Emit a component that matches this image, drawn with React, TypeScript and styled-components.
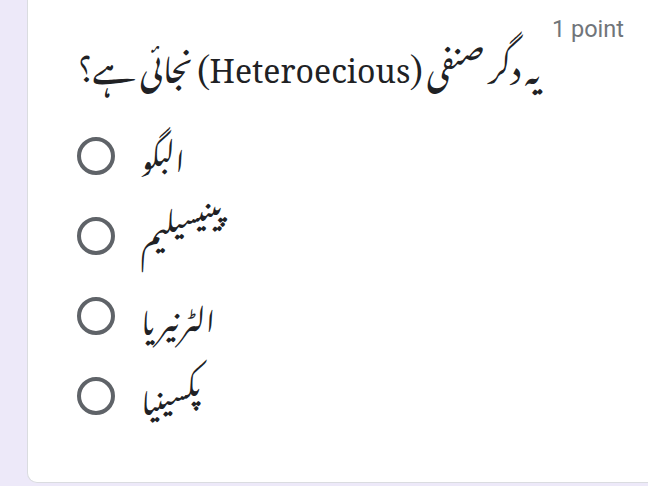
import { createGlobalStyle, styled } from 'styled-components';

const GlobalStyle = createGlobalStyle`
	html, body {
		margin: 0;
		padding: 0;
		background: #ede9f9;
	}
	body {
		font-family: Roboto, 'Liberation Sans', sans-serif;
	}
`;

const urduFont = `'Noto Nastaliq Urdu', 'DejaVu Serif', 'DejaVu Sans', serif`;

const Page = styled.div`
	height: 486px;
	box-sizing: border-box;
	padding: 0 0 3px 27px;
	overflow: hidden;
`;

const Card = styled.div`
	height: 100%;
	box-sizing: border-box;
	background: #fff;
	border: 1px solid #dadce0;
	border-top: none;
	border-right: none;
	border-radius: 0 0 0 10px;
	padding: 16px 24px 0 49px;
`;

const Header = styled.div`
	display: flex;
	align-items: flex-start;
	gap: 12px;
`;

const Title = styled.div`
	flex: 1;
	direction: rtl;
	text-align: right;
	font-family: ${urduFont};
	font-size: 32px;
	line-height: 48px;
	color: #202124;
	padding-top: 22px;
`;

const Points = styled.div`
	font-size: 23.5px;
	line-height: 26px;
	color: #70757a;
	white-space: nowrap;
`;

const Options = styled.div`
	display: flex;
	flex-direction: column;
	margin-top: 30px;
`;

const Option = styled.label`
	display: flex;
	align-items: center;
	gap: 26px;
	height: 80px;
`;

const Radio = styled.span`
	flex: none;
	width: 38px;
	height: 38px;
	box-sizing: border-box;
	border: 4px solid #5f6368;
	border-radius: 50%;
`;

const OptionText = styled.span`
	direction: rtl;
	font-family: ${urduFont};
	font-size: 29px;
	line-height: 80px;
	color: #202124;
`;

const options = ['البگو', 'پینیسیلیم', 'الٹرنیریا', 'پکسینیا'];

export default function App() {
	return (
		<>
			<GlobalStyle />
			<Page>
				<Card>
					<Header>
						<Title>یہ دگر صنفی (Heteroecious) نجائی ہے؟</Title>
						<Points>1 point</Points>
					</Header>
					<Options>
						{options.map((o) => (
							<Option key={o}>
								<Radio />
								<OptionText>{o}</OptionText>
							</Option>
						))}
					</Options>
				</Card>
			</Page>
		</>
	);
}
